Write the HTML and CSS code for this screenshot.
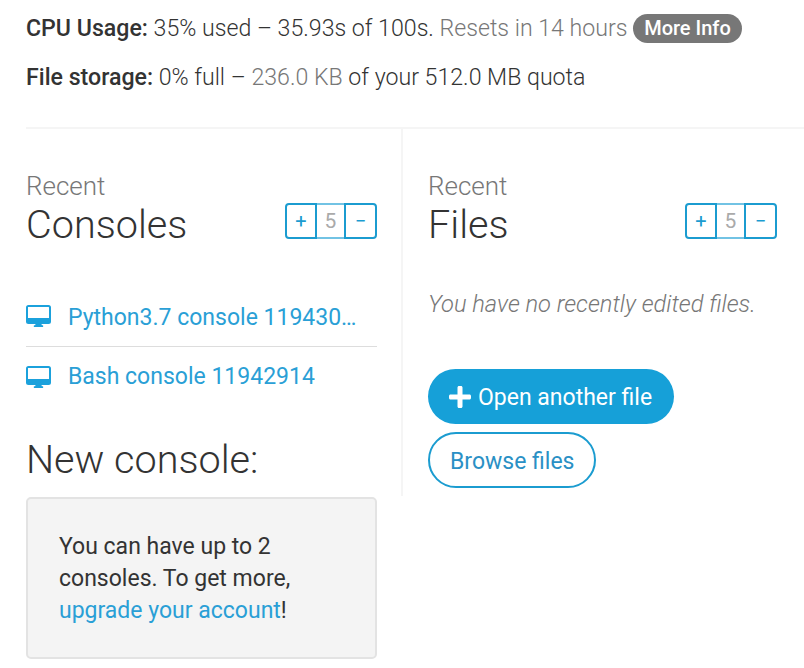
FILE: index.html
```html
<!DOCTYPE html>
<html lang="en">
<head>
<meta charset="utf-8">
<title>Dashboard</title>
<link rel="stylesheet" href="styles.css">
</head>
<body>
<section class="usage">
  <p class="usage-line"><strong>CPU Usage:</strong> 35% used – 35.93s of 100s. <span class="muted">Resets in 14 hours</span> <a class="badge">More Info</a></p>
  <p class="usage-line"><strong>File storage:</strong> 0% full – <span class="muted">236.0 KB</span> of your 512.0 MB quota</p>
</section>
<main class="columns">
  <section class="col col-left">
    <header class="col-head">
      <h2 class="title"><small>Recent</small>Consoles</h2>
      <div class="stepper"><button class="step">+</button><span class="count">5</span><button class="step">−</button></div>
    </header>
    <ul class="list">
      <li class="item">
        <svg class="pc" viewBox="0 0 25 22"><path fill-rule="evenodd" d="M2.500 0h20A2.500 2.500 0 0 1 25 2.500v14A2.500 2.500 0 0 1 22.500 19H15.500l.3 1.200h1c.6 0 .6 1.800 0 1.800H8.200c-.6 0-.6-1.800 0-1.800h1l.3-1.200H2.500A2.500 2.500 0 0 1 0 16.500v-14A2.500 2.500 0 0 1 2.500 0zM2 2v11h21V2.500c0-.3-.2-.5-.5-.5z"/></svg>
        <a class="link ellipsis">Python3.7 console 11943000</a>
      </li>
      <li class="item">
        <svg class="pc" viewBox="0 0 25 22"><path fill-rule="evenodd" d="M2.500 0h20A2.500 2.500 0 0 1 25 2.500v14A2.500 2.500 0 0 1 22.500 19H15.500l.3 1.200h1c.6 0 .6 1.800 0 1.800H8.200c-.6 0-.6-1.800 0-1.800h1l.3-1.200H2.500A2.500 2.500 0 0 1 0 16.500v-14A2.500 2.500 0 0 1 2.500 0zM2 2v11h21V2.500c0-.3-.2-.5-.5-.5z"/></svg>
        <a class="link ellipsis">Bash console 11942914</a>
      </li>
    </ul>
    <h2 class="new-title">New console:</h2>
  </section>
  <section class="col col-right">
    <header class="col-head">
      <h2 class="title"><small>Recent</small>Files</h2>
      <div class="stepper"><button class="step">+</button><span class="count">5</span><button class="step">−</button></div>
    </header>
    <p class="empty">You have no recently edited files.</p>
    <div class="actions">
      <a class="btn btn-solid"><svg class="plus" viewBox="0 0 22 22"><path d="M8.500 1.500c0-.8.700-1.500 1.500-1.500h2c.8 0 1.500.7 1.500 1.500v7h7c.8 0 1.500.7 1.500 1.500v2c0 .8-.7 1.500-1.500 1.500h-7v7c0 .8-.7 1.500-1.500 1.500h-2c-.8 0-1.500-.7-1.500-1.500v-7h-7C.7 13.500 0 12.800 0 12v-2c0-.8.700-1.500 1.500-1.500h7z"/></svg>Open another file</a>
      <a class="btn btn-outline">Browse files</a>
    </div>
  </section>
</main>
<aside class="notice">You can have up to 2 consoles. To get more, <a class="link">upgrade your account</a>!</aside>
</body>
</html>
```
FILE: styles.css
```css
* { box-sizing: border-box; }
html, body { margin: 0; padding: 0; }
body {
  width: 804px;
  height: 668px;
  overflow: hidden;
  background: #fff;
  color: #333;
  font-family: Roboto, "Liberation Sans", sans-serif;
  font-size: 23px;
  font-weight: 300;
}
.usage { padding: 13px 0 0 26px; height: 127px; }
.usage-line { margin: 0 0 17px; font-size: 23.150px; line-height: 32px; white-space: nowrap; }
.usage-line strong { font-weight: 500; }
.muted { color: #777; }
.badge {
  display: inline-block;
  padding: 0 11px;
  height: 29px;
  line-height: 29px;
  border-radius: 15px;
  background: #777;
  color: #fff;
  font-size: 20px;
  font-weight: 500;
  vertical-align: 1px;
}
.columns {
  display: flex;
  margin-left: 26px;
  height: 369px;
  border-top: 2px solid #f5f5f5;
}
.col { width: 377px; flex: none; }
.col-left { border-right: 2px solid #f5f5f5; padding-right: 24px; }
.col-right { flex: 1; padding-left: 25px; padding-right: 27px; }
.col-head { display: flex; justify-content: space-between; align-items: flex-end; padding-top: 40px; height: 116px; }
.title { margin: 0 0 -2px; font-size: 39.600px; font-weight: 300; line-height: 44px; color: #333; }
.title small { display: block; margin-bottom: 2px; font-size: 26px; line-height: 30px; color: #777; }
.stepper { display: flex; height: 36px; margin-bottom: 6px; }
.step {
  width: 32px;
  padding: 0;
  background: #fff;
  border: 2px solid #1b9cd0;
  color: #1b9cd0;
  font: 400 20px Roboto, sans-serif;
}
.step:first-child { border-radius: 4px 0 0 4px; }
.step:last-child { border-radius: 0 4px 4px 0; width: 33px; }
.count {
  width: 27px;
  border: solid #72c3e4;
  border-width: 2px 0;
  color: #aaa;
  font-size: 21px;
  font-weight: 400;
  line-height: 32px;
  text-align: center;
}
.list { list-style: none; margin: 41px 0 0; padding: 0; }
.item { display: flex; align-items: center; gap: 17px; height: 60px; padding-right: 17px; }
.item + .item { border-top: 1px solid #ddd; }
.item:first-child .link { padding-top: 2px; }
.pc { width: 25px; height: 22px; fill: #1ba1dc; flex: none; }
.link { color: #2a9fd6; font-weight: 400; }
.ellipsis { overflow: hidden; white-space: nowrap; text-overflow: ellipsis; min-width: 0; }
.new-title { margin: 32px 0 0; font-size: 39.600px; font-weight: 300; line-height: 44px; }
.empty { margin: 43px 0 0; font-size: 23.700px; line-height: 32px; font-style: italic; color: #777; }
.actions { display: flex; flex-direction: column; align-items: flex-start; gap: 8px; margin-top: 49px; }
.btn { display: inline-flex; align-items: center; height: 56px; padding-top: 2px; border-radius: 28px; font-size: 23px; font-weight: 400; }
.btn-solid { height: 55px; background: #16a0d8; color: #fff; padding-left: 21px; padding-right: 22px; }
.btn-outline { border: 2px solid #1b9cd0; color: #2a90c5; padding-left: 20px; padding-right: 20px; }
.plus { width: 22px; height: 22px; fill: #fff; margin: -2px 7px 0 0; }
.notice {
  margin: 1px 0 0 26px;
  width: 351px;
  height: 162px;
  padding: 32px 22px 0 31px;
  background: #f4f4f4;
  border: 2px solid #e3e3e3;
  border-radius: 5px;
  line-height: 32px;
  font-weight: 400;
}
```
